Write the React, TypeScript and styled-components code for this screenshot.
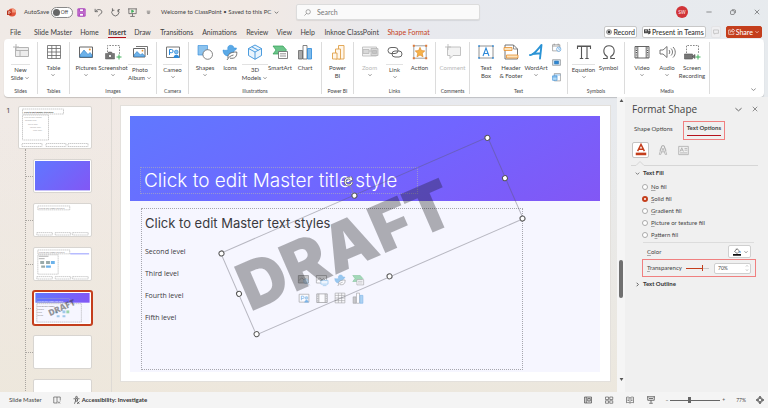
import React from "react";
import styled, { createGlobalStyle, css } from "styled-components";

const ui = `"Open Sans", "Noto Sans", sans-serif`;
const c = {
  text: "#444",
  dim: "#b8b8b8",
  line: "#dcdcdc",
  brand: "#c43e1c",
  deep: "#b5121b",
  blue: "#2b88d8",
  sky: "#83beec",
  orange: "#e8912d",
  green: "#3fae5a",
  mark: "#f08080",
};

const Global = createGlobalStyle`
  *, *::before, *::after { box-sizing: border-box; }
  body { margin: 0; font-family: ${ui}; color: ${c.text}; font-size: 6px; line-height: 8px; }
  button, input { font: inherit; color: inherit; margin: 0; }
  button { background: none; border: 0; padding: 0; }
  svg { display: block; flex: none; overflow: visible; }
`;

/* ---------- icons ---------- */

const shapes: Record<string, React.ReactNode> = {
  newSlide: (
    <g stroke="#b4b4b4" fill="#ededed">
      <path d="M2.5 3.500h13v9h-13z" />
      <path d="M2.500 6.500h13M7 6.500v6" />
      <path d="M3 0v6M0 3h6" fill="none" />
    </g>
  ),
  table: (
    <g stroke="#666" fill="#fff" strokeWidth=".8">
      <path d="M1.500 1.500h13v13h-13z" />
      <path d="M1.500 4.500h13M1.500 8h13M1.500 11.500h13M5.800 1.500v13M10.200 1.500v13" />
    </g>
  ),
  pictures: (
    <g>
      <path d="M1.500 3h13v10.500h-13z" fill="#fff" stroke="#666" />
      <path d="M2 11l4-5 4 4.500 2-2L14 11v2H2z" fill="#6cb2ea" stroke="#2b7cc4" strokeWidth=".6" />
      <circle cx="11.800" cy="5.500" r="1" fill={c.orange} />
    </g>
  ),
  screenshot: (
    <g fill="none">
      <path d="M2.500 8V1.500h12V10" stroke="#888" strokeDasharray="1.600 1.200" />
      <path d="M.5 9.500h2l1-1.500h3l1 1.500h2v5.500h-9z" fill="#777" stroke="#555" strokeWidth=".5" />
      <circle cx="5" cy="12" r="1.700" fill="#eee" stroke="#444" strokeWidth=".6" />
      <path d="M14 10.500v5M11.500 13h5" stroke={c.green} />
    </g>
  ),
  album: (
    <g>
      <path d="M4 2.500h11.500V11" fill="none" stroke="#666" strokeWidth=".9" />
      <path d="M1.500 4.500h11.500v8.500H1.500z" fill="#fff" stroke="#666" />
      <path d="M2 11l3-3.500L8.500 11l1.500-1.500 2.500 2v1H2z" fill="#6cb2ea" stroke="#2b7cc4" strokeWidth=".6" />
      <circle cx="10.500" cy="6.700" r=".9" fill={c.orange} />
    </g>
  ),
  cameo: (
    <g>
      <path d="M1.500 3h13v10.500h-13z" fill="#fff" stroke="#777" />
      <path d="M4.500 11V5.500h2a1.600 1.600 0 010 3.200h-2" fill="none" stroke={c.blue} />
      <circle cx="11.300" cy="8" r="1.900" fill={c.sky} stroke={c.blue} strokeWidth=".6" />
      <path d="M8.500 14c0-4.500 5.800-4.500 5.800 0z" fill={c.blue} />
    </g>
  ),
  shapes: (
    <g>
      <path d="M1 1.500h9.500v9.500H1z" fill="#8cc3ee" stroke={c.blue} strokeWidth=".6" />
      <circle cx="10.700" cy="10.500" r="4.800" fill="#fff" stroke="#666" strokeWidth=".8" />
    </g>
  ),
  icons: (
    <g>
      <path d="M1 6c2 .5 4 .5 5-.5C5 3 7 .8 9.300 1.300c2 .3 2.500 1.700 2.500 2.700l2.700 0c-.3 2-1.500 2.500-2.500 3-.5 4-3 5-6 5C3 12 1 9.500 1 6z" fill="#5aa9e6" stroke={c.blue} strokeWidth=".5" />
      <path d="M6 14c-.5-4 2.500-6 8.800-6C15 12 13.500 15 8 14.200M5 16c1.500-3 4-4.500 6.500-5" fill="#fff" stroke="#555" strokeWidth=".8" />
    </g>
  ),
  cube: (
    <g fill="#e9f4fd" stroke="#3a92da" strokeWidth=".9">
      <path d="M8 1l6.500 3.500v7L8 15.300 1.500 11.500v-7z" />
      <path d="M1.500 4.500L8 8l6.500-3.500M8 8v7.300M4.800 2.800l6.500 3.500" fill="none" />
    </g>
  ),
  smartart: (
    <g>
      <path d="M1 2h10l3.500 4L11 10H1l3-4z" fill="#6cc58a" stroke="#2f9e55" strokeWidth=".7" />
      <path d="M6.500 7.500h9v7h-9z" fill="#fff" stroke="#666" strokeWidth=".8" />
      <path d="M8 9.800h6M8 12h6" stroke="#777" strokeWidth=".8" />
    </g>
  ),
  chart: (
    <g strokeWidth=".8">
      <path d="M1.500 6.500h4v8.500h-4z" fill="#aaa" stroke="#666" />
      <path d="M6 1.500h4v13.500H6z" fill="#fff" stroke="#666" />
      <path d="M10.500 4.500h4V15h-4z" fill="#7dbbec" stroke={c.blue} />
    </g>
  ),
  powerbi: (
    <g fill="#fff6ea" stroke="#e0a04a" strokeWidth=".9">
      <path d="M8.500 1.500h5.500v13.500H8.500z" />
      <path d="M5.500 5h5v10h-5z" />
      <path d="M2.500 9h4.500v6H2.500z" />
    </g>
  ),
  zoom: (
    <g fill="#d8d8d8" stroke="#b8b8b8" strokeWidth=".8">
      <path d="M.5 3h14v9H.5z" fill="#f2f2f2" />
      <path d="M1 5.500h6v4H1zM7 7h3M9 4.500h7v7H9z" />
      <path d="M10.500 6.500h4v3h-4z" fill="#c4c4c4" />
    </g>
  ),
  link: (
    <g fill="none" stroke="#666">
      <rect x="1" y="3.500" width="10" height="6" rx="3" />
      <rect x="5" y="7" width="10" height="6" rx="3" />
    </g>
  ),
  action: (
    <g>
      <path d="M1.800 1.800h12.400v12.400H1.800z" fill="#fff" stroke="#888" strokeWidth=".8" />
      <path d="M8 3.300l1.400 3.200 3.400.4-2.500 2.400.7 3.500L8 11l-3 1.800.7-3.500-2.500-2.400 3.400-.4z" fill="#f6b24a" stroke="#dd8420" strokeWidth=".6" />
      <path d="M.8.800h2v2h-2zM13.200.800h2v2h-2zM.8 13.200h2v2h-2zM13.200 13.200h2v2h-2z" fill="#e07b39" />
    </g>
  ),
  comment: (
    <g fill="#f3f3f3" stroke="#bcbcbc" strokeWidth=".9">
      <path d="M2.500 3h13v8.500H8L5 14.500v-3H2.500z" />
      <path d="M3 0v6M0 3h6" />
    </g>
  ),
  textbox: (
    <g>
      <path d="M1 2h14v12H1z" fill="#fff" stroke="#777" strokeWidth=".8" />
      <path d="M5 12l3-8 3 8M6 9.500h4" fill="none" stroke={c.blue} strokeWidth="1.100" />
      <path d="M.200 1.200h1.600v1.600H.200zM14.200 1.200h1.600v1.600h-1.600zM.200 13.200h1.600v1.600H.200zM14.200 13.200h1.600v1.600h-1.600z" fill={c.blue} />
    </g>
  ),
  header: (
    <g>
      <path d="M2 1h8.500l4 4v10H2z" fill="#fff" stroke="#666" strokeWidth=".9" />
      <path d="M1 3.500h8v3H1zM3.500 11h11.500v3H3.500z" fill="#fbe3bd" stroke={c.orange} strokeWidth=".8" />
      <path d="M10.500 1v4h4" fill="none" stroke="#666" strokeWidth=".7" />
    </g>
  ),
  wordart: (
    <path d="M2 11c3 1 8-6 11.500-10L12 14.500M4.500 10l8-.8" fill="none" stroke="#2a93d5" strokeWidth="1.900" strokeLinecap="round" strokeLinejoin="round" />
  ),
  date: (
    <g fill="#fff" stroke="#777">
      <path d="M1 3h13v11H1zM1 5.500h13M4 1v3M11 1v3" />
      <circle cx="12" cy="11" r="3.800" stroke={c.blue} />
      <path d="M12 9v2.200h2" stroke={c.blue} />
    </g>
  ),
  number: (
    <g fill="#cfe5f7" stroke="#777">
      <path d="M1 3h14v10H1z" />
      <path d="M4.500 5.500h7v5h-7z" fill={c.blue} stroke="#2b6ca8" />
    </g>
  ),
  object: (
    <g fill="#fff" stroke="#777">
      <path d="M4 1h11v13H4z" />
      <path d="M1 5h8v8H1z" fill="#b5daf5" stroke={c.blue} />
      <path d="M1 7h8M4 3.500h11" stroke={c.blue} />
    </g>
  ),
  equation: (
    <path d="M1.500 5V2h13v3M5.500 2v12.500M3.800 14.500h3.400M11 2v12.500M9.300 14.500h3.400M1.500 2.500h13" fill="none" stroke="#555" strokeWidth="1.100" />
  ),
  symbol: (
    <path d="M2 14.500h4.200v-2C1 9.500 2 1.800 8 1.800s7 7.700 1.800 10.700v2H14" fill="none" stroke="#555" strokeWidth="1.100" />
  ),
  video: (
    <g fill="#fff" stroke="#555" strokeWidth=".9">
      <path d="M1 2.500h14v11.500H1zM3.800 2.500v11.500M12.200 2.500v11.500" />
      <path d="M2.400 3.500v10M13.600 3.500v10" strokeDasharray="1.100 1.200" strokeWidth="1.200" />
    </g>
  ),
  audio: (
    <g fill="none" stroke="#666" strokeWidth=".9">
      <path d="M1 6h3l4-3.500v11L4 10H1z" />
      <path d="M10 6c1 1 1 3 0 4M12 4.500c2 2 2 5 0 7M14 3c3 3 3 7.500 0 10.500" />
    </g>
  ),
  recording: (
    <g fill="none">
      <path d="M2.500 9V1.500h12V10" stroke="#888" strokeDasharray="1.600 1.200" />
      <path d="M.5 10h8v5h-8zM8.500 12l2.500-1.500v4L8.500 13z" fill="#777" stroke="#555" strokeWidth=".6" />
      <path d="M14 10.500v5M11.500 13h5" stroke={c.green} />
    </g>
  ),
  caret: <path d="M4 6l4 4 4-4" fill="none" stroke="#555" strokeWidth="1.700" />,
  chevron: <path d="M1 5l7 6 7-6" fill="none" stroke="#555" strokeWidth="2" />,
  caretRight: <path d="M6 4l4 4-4 4" fill="none" stroke="#444" strokeWidth="1.900" />,
  caretUp: <path d="M4 10l4-4 4 4" fill="none" stroke="#666" strokeWidth="1.700" />,
  triUp: <path d="M8 3l6 10H2z" fill="#555" />,
  triDown: <path d="M8 13L2 3h12z" fill="#555" />,
  logo: (
    <g>
      <circle cx="9" cy="8" r="7" fill="#e0533a" />
      <path d="M9 1a7 7 0 017 7H9z" fill="#f39a7c" />
      <path d="M0 4.500h8v8H0z" fill="#b7321b" />
      <path d="M3 11V6.300h1.600a1.300 1.300 0 010 2.700H3" fill="none" stroke="#fff" />
    </g>
  ),
  save: (
    <g fill="#fff" stroke="#a63db8" strokeWidth="1.500">
      <path d="M1.500 1.500h13v13h-13z" fill="#c77ad3" />
      <path d="M4.500 1.500h7v5h-7zM4.500 9.500h7v5h-7z" />
    </g>
  ),
  undo: <path d="M2 1.500v5h5M2.300 6.300C5 1.500 14 1.500 14 7c0 3-3.500 4-6.500 7.500" fill="none" stroke="#555" strokeWidth="1.400" />,
  redo: <path d="M3 3.500A6.300 6.300 0 1012.500 3.500M2.500.5v3.500h3.500M12.500 7.500V3h3.500" fill="none" stroke="#555" strokeWidth="1.400" />,
  present: (
    <g fill="none" stroke="#555" strokeWidth="1.300">
      <path d="M0 1.500h16M1.500 1.500v8.500h13V1.500M8 10v4.500M4 15h8" />
      <path d="M6.500 3.500v4.500l4-2.200z" fill={c.green} stroke={c.green} />
    </g>
  ),
  more: <path d="M4 5h8M5 8.500l3 3 3-3z" fill="none" stroke="#555" strokeWidth="1.400" />,
  search: (
    <g fill="none" stroke="#777" strokeWidth="1.400">
      <circle cx="9.500" cy="6.500" r="5" />
      <path d="M6 10l-5 5" />
    </g>
  ),
  min: <path d="M1 8h14" stroke="#444" strokeWidth="1.500" />,
  restore: (
    <g fill="none" stroke="#444" strokeWidth="1.500">
      <rect x="1.500" y="4.500" width="10" height="10" rx="2" />
      <path d="M5 2h7c2 0 2.500 1 2.500 2.500V11" />
    </g>
  ),
  close: <path d="M2 2l12 12M14 2L2 14" stroke="#444" strokeWidth="1.500" />,
  record: (
    <g>
      <circle cx="8" cy="8" r="6.500" fill="none" stroke="#333" strokeWidth="1.500" />
      <circle cx="8" cy="8" r="3.800" fill="#333" />
    </g>
  ),
  teams: (
    <g fill="#444">
      <path d="M0 3h9v9H0z" />
      <path d="M2.500 5.500h4M4.500 5.500V10" stroke="#fff" strokeWidth="1.200" />
      <circle cx="12.500" cy="3.500" r="2" />
      <path d="M9.500 6.500H15V11c0 3-4 4-7 2.500h1.500z" />
    </g>
  ),
  bubble: <path d="M1.500 2.500h13v9H7L4.500 14v-2.500h-3z" fill="none" stroke="#b4b4b4" strokeWidth="1.700" />,
  share: <path d="M6 4.500H1.500v10h12V11M5.500 10c0-4 2-5.500 5.500-5.500V2l4.500 4-4.500 4V7.500c-2.500 0-4 .5-5.500 2.500z" fill="none" stroke="#fff" strokeWidth="1.400" />,
  fillA: (
    <g>
      <path d="M3.500 9.500L8 .5l4.500 9M5 7h6" fill="none" stroke={c.brand} strokeWidth="1.900" />
      <path d="M1 11.500h14v3.500H1z" fill={c.brand} />
    </g>
  ),
  outlineA: (
    <path d="M2 15L6.500 1h3L14 15h-2.500L8 5 4.500 15zM5.500 11h5M6.500 1L3 9M9.500 1L13 9" fill="none" stroke="#9a9a9a" strokeWidth=".9" />
  ),
  boxA: (
    <g fill="none" stroke="#999" strokeWidth=".9">
      <path d="M1 2h14v12H1zM9.500 5h4M9.500 7.500h4M3 11.500h10.500M3 9.500L5.500 4 8 9.500M4 7.500h3" />
    </g>
  ),
  bucket: (
    <g>
      <path d="M3 7l5-5.500 5 4.500-4.500 5z" fill="#fff" stroke="#444" strokeWidth="1.300" />
      <path d="M6.500 4V1" stroke="#444" />
      <path d="M14 6v4" stroke={c.blue} strokeWidth="1.800" />
      <path d="M0 12h16v3.500H0z" fill="#111" />
    </g>
  ),
  book: (
    <g fill="none" stroke="#444" strokeWidth="1.200">
      <path d="M8 14H1.500V2H8v12M8 2h6.500v7M10 11l4 4M14 11l-4 4" />
    </g>
  ),
  person: (
    <g fill="none" stroke="#333" strokeWidth="1.300">
      <circle cx="7" cy="2.500" r="1.800" />
      <path d="M1 5.500h12M5 6v4l-2 5.500M9 6v4M8 11l5 5M13 11l-5 5M5 10h4" />
    </g>
  ),
  normal: <path d="M1 2h14v12H1zM4.500 2v12M7.500 5h5v5h-5z" fill="#aaa" fillOpacity=".3" stroke="#444" strokeWidth="1.300" />,
  sorter: <path d="M1 2h6v5H1zM9.500 2h6v5h-6zM1 9.500h6v5H1zM9.500 9.500h6v5h-6z" fill="none" stroke="#444" strokeWidth="1.200" />,
  reading: <path d="M8 4C5 1.500 3 2 1 2.500v11c3-1 5-.5 7 1 2-1.500 4-2 7-1v-11C13 2 11 1.500 8 4v10M3 6h3M3 9h3M10 6h3M10 9h3" fill="none" stroke="#444" strokeWidth="1.200" />,
  show: <path d="M0 1.500h16M1.500 1.500v7h13v-7M8 8.500v5M4.500 14.500h7M4 5h8" fill="none" stroke="#444" strokeWidth="1.500" />,
  fit: (
    <g fill="none" stroke="#444" strokeWidth="1.400">
      <path d="M5 5h6v6H5zM8 0L5.500 3h5zM8 16l-2.500-3h5zM0 8l3-2.500v5zM16 8l-3-2.500v5z" />
    </g>
  ),
  picSearch: (
    <g fill="#777" stroke="#555">
      <path d="M.5 2h13.500v10H.5z" fill="#aaa" />
      <path d="M1 9l4-4 3 3 2-2 4 4" fill="none" />
      <circle cx="10.500" cy="9.500" r="3" fill="#9db9cd" stroke="#5a8fb8" />
      <path d="M12.500 12l3 3" stroke="#5a8fb8" />
    </g>
  ),
  picScreen: (
    <g fill="#fff" stroke="#777">
      <path d="M.5 2h13.500v10H.5z" />
      <path d="M1 9l4-4 3 3 2-2 4 4" fill="none" />
      <path d="M6.500 8.500h9.500v5H6.500zM9 15.500h5" stroke="#5aa9e6" fill="#e9f4fd" />
    </g>
  ),
};

const Icon = ({ name, size = 8 }: { name: string; size?: number }) => (
  <svg viewBox="0 0 16 16" width={size} height={size} aria-hidden="true">
    {shapes[name]}
  </svg>
);

/* ---------- frame ---------- */

const Page = styled.div`
  height: 100vh;
  display: grid;
  grid-template-rows: auto auto auto minmax(0, 1fr) auto;
  overflow: hidden;
  background: linear-gradient(to bottom, rgba(237, 231, 219, 0) 30%, rgba(237, 231, 219, 0.9) 100%),
    linear-gradient(100deg, #f0eae6 0%, #f1e9e4 30%, #e8e9ee 48%, #e7ebee 100%);
`;

const TitleBar = styled.header`
  display: flex;
  align-items: center;
  height: 24px;
  padding: 0 8px 0 7px;
`;
const Quick = styled.div`
  display: flex;
  align-items: center;
  gap: 8px;
  margin: 0 9px 0 4px;
`;
const AutoSave = styled.label`
  display: flex;
  align-items: center;
  gap: 2px;
  margin-left: 8px;
  font-family: Lato, ${ui};
  white-space: nowrap;
`;
const Switch = styled.span`
  display: flex;
  align-items: center;
  justify-content: space-between;
  width: 22px;
  height: 11px;
  padding: 0 4px 0 1px;
  border: 1px solid #888;
  border-radius: 6px;
  background: #fff;
  font-size: 5px;
  input {
    appearance: none;
    width: 7px;
    height: 7px;
    border-radius: 50%;
    background: #666;
  }
`;
const DocName = styled.button`
  display: flex;
  align-items: center;
  gap: 2px;
  width: 126px;
  font-family: Lato, ${ui};
  white-space: nowrap;
`;
const SearchBox = styled.label`
  display: flex;
  align-items: center;
  gap: 6px;
  flex: 0 1 184px;
  margin-left: 9px;
  height: 16px;
  padding: 0 7px;
  border: 1px solid #dcdcdc;
  border-radius: 2px;
  background: #fafafa;
  box-shadow: 0 1px 1px rgba(0, 0, 0, 0.08);
  input {
    flex: 1;
    min-width: 0;
    border: 0;
    padding: 0;
    background: none;
    font-family: Lato, ${ui};
    font-size: 7px;
    &::placeholder { color: #777; opacity: 1; }
  }
`;
const WindowTools = styled.div`
  display: flex;
  align-items: center;
  gap: 18px;
  margin-left: auto;
`;
const Avatar = styled.button`
  width: 12px;
  height: 12px;
  border-radius: 50%;
  background: #d13438;
  color: #fff;
  font-size: 5px;
  line-height: 12px;
`;

const TabRow = styled.nav`
  display: flex;
  align-items: center;
  height: 15px;
  padding: 0 6px 0 10px;
`;
const Tabs = styled.div`
  display: flex;
  gap: 8px;
`;
const Tab = styled.button<{ $active?: boolean; $accent?: boolean; $w: number }>`
  min-width: ${(p) => p.$w}px;
  height: 13px;
  padding: 1px 0 0;
  font-family: Lato, ${ui};
  font-size: 7px;
  line-height: 10px;
  text-align: left;
  white-space: nowrap;
  border-bottom: 1px solid transparent;
  color: ${(p) => (p.$accent ? c.brand : "#3f3f3f")};
  ${(p) => p.$active && css`font-weight: 700; border-bottom-color: ${c.deep};`}
`;
const Actions = styled.div`
  display: flex;
  align-items: center;
  gap: 5px;
  margin-left: auto;
`;
const ActionButton = styled.button<{ $fill?: boolean; $ghost?: boolean }>`
  display: flex;
  align-items: center;
  gap: 1px;
  height: 12px;
  padding: 0 1px;
  border: 1px solid ${(p) => (p.$ghost ? "#e4e4e6" : p.$fill ? c.brand : "#c8c8c8")};
  border-radius: 2px;
  background: ${(p) => (p.$ghost ? "#efeff1" : p.$fill ? c.brand : "#fff")};
  color: ${(p) => (p.$fill ? "#fff" : "#333")};
  font-family: Lato, ${ui};
  font-size: 7px;
  font-weight: 500;
  white-space: nowrap;
  path { ${(p) => p.$fill && css`stroke: #fff;`} }
`;

/* ---------- ribbon ---------- */

const Ribbon = styled.section`
  display: flex;
  margin: 0 4px;
  height: 58px;
  border-radius: 4px;
  background: #fff;
  box-shadow: 0 1px 1px rgba(0, 0, 0, 0.18);
`;
const Group = styled.div<{ $w: number }>`
  display: flex;
  flex-direction: column;
  align-items: center;
  justify-content: space-between;
  width: ${(p) => p.$w}px;
  margin: 3px 0;
  border-right: 1px solid ${c.line};
`;
const GroupTools = styled.div`
  display: flex;
  justify-content: center;
`;
const GroupName = styled.span`
  font-family: Lato, ${ui};
  font-size: 5px;
  line-height: 6px;
  white-space: nowrap;
`;
const Tool = styled.button<{ $w?: number; $dim?: boolean }>`
  display: flex;
  flex-direction: column;
  align-items: center;
  width: ${(p) => p.$w ?? 25}px;
  padding-top: 2px;
  font-family: Lato, ${ui};
  white-space: nowrap;
  color: ${(p) => (p.$dim ? c.dim : c.text)};
`;
const ToolLabel = styled.span<{ $split?: boolean }>`
  display: flex;
  flex-direction: column;
  align-items: center;
  margin-top: 4px;
  ${(p) => p.$split && css`border-top: 1px solid #e2e2e2; min-width: 17px; padding-top: 1px;`}
`;
const Line = styled.span`
  display: flex;
  align-items: center;
  gap: 1px;
  min-height: 6px;
`;
const SmallTools = styled.div`
  display: flex;
  flex-direction: column;
  align-items: center;
  gap: 6px;
  width: 15px;
  padding-top: 1px;
`;
const Collapse = styled.button`
  align-self: flex-end;
  margin: 0 8px 5px auto;
`;

type ToolDef = { icon: string; lines: string[]; split?: boolean; dim?: boolean; drop?: boolean };
const groups: { name: string; w: number; tw?: number; tools: ToolDef[] }[] = [
  { name: "Slides", w: 34, tools: [{ icon: "newSlide", lines: ["New", "Slide"], split: true, drop: true }] },
  { name: "Tables", w: 32, tools: [{ icon: "table", lines: ["Table", ""], drop: true }] },
  {
    name: "Images", w: 87, tw: 27,
    tools: [
      { icon: "pictures", lines: ["Pictures", ""], drop: true },
      { icon: "screenshot", lines: ["Screenshot", ""], drop: true },
      { icon: "album", lines: ["Photo", "Album"], split: true, drop: true },
    ],
  },
  { name: "Camera", w: 32, tools: [{ icon: "cameo", lines: ["Cameo", ""], split: true, drop: true }] },
  {
    name: "Illustrations", w: 133,
    tools: [
      { icon: "shapes", lines: ["Shapes", ""], drop: true },
      { icon: "icons", lines: ["Icons"] },
      { icon: "cube", lines: ["3D", "Models"], split: true, drop: true },
      { icon: "smartart", lines: ["SmartArt"] },
      { icon: "chart", lines: ["Chart"] },
    ],
  },
  { name: "Power BI", w: 32, tools: [{ icon: "powerbi", lines: ["Power", "BI"] }] },
  {
    name: "Links", w: 82,
    tools: [
      { icon: "zoom", lines: ["Zoom", ""], drop: true, dim: true },
      { icon: "link", lines: ["Link", ""], split: true, drop: true },
      { icon: "action", lines: ["Action"] },
    ],
  },
  { name: "Comments", w: 34, tools: [{ icon: "comment", lines: ["Comment"], dim: true }] },
  {
    name: "Text", w: 98,
    tools: [
      { icon: "textbox", lines: ["Text", "Box"] },
      { icon: "header", lines: ["Header", "& Footer"] },
      { icon: "wordart", lines: ["WordArt", ""], drop: true },
    ],
  },
  {
    name: "Symbols", w: 57,
    tools: [
      { icon: "equation", lines: ["Equation", ""], split: true, drop: true },
      { icon: "symbol", lines: ["Symbol"] },
    ],
  },
  {
    name: "Media", w: 85,
    tools: [
      { icon: "video", lines: ["Video", ""], drop: true },
      { icon: "audio", lines: ["Audio", ""], drop: true },
      { icon: "recording", lines: ["Screen", "Recording"] },
    ],
  },
];

/* ---------- thumbnails ---------- */

const Main = styled.main`
  display: grid;
  grid-template-columns: 112px minmax(0, 1fr) 8px 143px;
  min-height: 0;
`;
const Thumbs = styled.aside`
  display: flex;
  gap: 7px;
  padding: 9px 0 0 6px;
  border-right: 1px solid #dedad5;
  overflow: hidden;
  font-size: 8px;
`;
const Tree = styled.div`
  display: flex;
  flex-direction: column;
  gap: 10px;
  width: 74px;
`;
const Master = styled.button`
  display: block;
  width: 74px;
  height: 43px;
  flex: none;
  border: 1px solid #d8d5d1;
  border-radius: 2px;
  background: #fff;
  text-align: left;
`;
const Branch = styled.div`
  display: flex;
  flex-direction: column;
  gap: 10px;
  margin: -10px 0 0 7px;
  padding-top: 10px;
  border-left: 1px dotted #a9a5a0;
`;
const Leaf = styled.div`
  display: flex;
  align-items: center;
  flex: none;
  &::before {
    content: "";
    width: 7px;
    border-top: 1px dotted #a9a5a0;
  }
`;
const LeafSlide = styled.button<{ $selected?: boolean }>`
  display: block;
  width: 59px;
  height: 34px;
  padding: 1px;
  text-align: left;
  border: 1px solid #d8d5d1;
  border-radius: 2px;
  background: #fff;
  ${(p) => p.$selected && css`border-color: ${c.brand}; box-shadow: 0 0 0 1px ${c.brand};`}
`;
const Purple = styled.span`
  display: block;
  height: 100%;
  background: linear-gradient(135deg, #5f77ff, #8257f5);
  border-bottom: 1px solid #c9c2fb;
`;

const Miniature = ({ kind }: { kind: "master" | "title" | "content" | "draft" }) => {
  const box = { fill: "none", stroke: "#999", strokeWidth: 0.5, strokeDasharray: "1.500 .5" };
  if (kind === "master")
    return (
      <svg viewBox="0 0 72 41" width="100%" height="100%">
        <rect x="3.500" y="2" width="41" height="5" {...box} />
        <rect x="3.500" y="8" width="26" height="25" {...box} />
        <text x="5" y="5.500" fontSize="2" fontWeight="700" fill="#444">Click to edit Master title style</text>
        <g fontSize="2" fill="#999">
          <text x="5" y="11">Click to edit Master</text>
          <text x="6" y="14">Second level</text>
          <text x="9" y="17.500">Third level</text>
          <text x="11" y="21">Fourth level</text>
          <text x="14" y="24">Fifth level</text>
        </g>
        {[3, 27, 49].map((x) => <rect key={x} x={x} y="36.500" width="20" height="3" {...box} />)}
      </svg>
    );
  if (kind === "draft")
    return (
      <svg viewBox="0 0 56 31" width="100%" height="100%">
        <defs>
          <linearGradient id="mini"><stop stopColor="#5f77ff" /><stop offset="1" stopColor="#8257f5" /></linearGradient>
        </defs>
        <rect width="56" height="31" fill="#f6f6ff" />
        <rect width="56" height="10" fill="url(#mini)" />
        <rect x="1.500" y="6" width="34" height="3.500" fill="none" stroke="#aab" strokeWidth=".4" />
        <text x="2" y="9" fontSize="2" fill="#fff">Click to edit Master title style</text>
        <rect x="1.500" y="11" width="46" height="19" {...box} />
        <text x="2" y="14" fontSize="2" fill="#555">Click to edit Master</text>
        <g fontSize="2" fill="#777">
          <text x="2" y="17.500">Second</text><text x="2" y="20.500">Third</text><text x="2" y="24">Fourth</text>
        </g>
        <path d="M20 19h3v2h-3zM28 18h3v3h-3zM22 23h3v2h-3zM28 23h3v2h-3z" fill="#9fc8ea" />
        <path d="M32 18h3v3h-3z" fill="#9bd3ab" />
        <text x="15" y="24" fontSize="9" fontWeight="800" fill="#333" fillOpacity=".5" transform="rotate(-24 15 24)">DRAFT</text>
      </svg>
    );
  return (
    <svg viewBox="0 0 56 31" width="100%" height="100%">
      <rect x="2.500" y="1" width="33" height="4" {...box} />
      <text x="3.500" y="4" fontSize="2" fill="#777">Click to edit Master title style</text>
      {kind === "content" && (
        <g>
          <path d="M36 5h19.500" stroke="#5f6bff" strokeWidth=".7" />
          <rect x="2.500" y="6" width="21" height="20" {...box} />
          <path d="M3.500 7.500h10M3.500 10h6" stroke="#777" strokeWidth=".6" />
          <path d="M5 12.500h4v3H5zM11 12.500h4v3h-4zM6 17h4v2.500H6zM3.500 17h1" fill="#9aa" />
          <path d="M16 12.500h4v3h-4zM11 17h5v2.500h-5z" fill="#6cb2ea" />
        </g>
      )}
      {[1.5, 20.5, 38.5].map((x) => <rect key={x} x={x} y="28.500" width="16" height="2.500" {...box} />)}
    </svg>
  );
};

/* ---------- slide ---------- */

const Stage = styled.section`
  padding: 8px 6px 10px 8px;
  min-width: 0;
`;
const Paper = styled.div`
  height: 100%;
  max-height: 277px;
  padding: 10px 10px 9px 9px;
  background: #fff;
  border: 1px solid #e3e0dc;
  display: flex;
`;
const Slide = styled.article`
  position: relative;
  flex: 1;
  min-width: 0;
  display: flex;
  flex-direction: column;
  background: #f6f6ff;
  font-family: Inter, ${ui};
`;
const SlideHead = styled.div`
  display: flex;
  align-items: flex-end;
  height: 85px;
  padding: 0 10px 7px;
  background: linear-gradient(150deg, #6078ff 0%, #7165ff 55%, #8257f5 100%);
`;
const TitleHolder = styled.h1`
  width: 278px;
  height: 27px;
  margin: 0;
  padding-left: 4px;
  outline: 1px dotted rgba(170, 170, 190, 0.7);
  outline-offset: -1px;
  color: #fff;
  font-size: 19px;
  font-weight: 300;
  line-height: 28px;
  white-space: nowrap;
`;
const BodyHolder = styled.div`
  flex: 1;
  width: 382px;
  margin: 7px 0 2px 11px;
  padding: 5px 3px;
  border: 1px dotted #a6a6ae;
  color: #3a3a40;
`;
const BodyLead = styled.p`
  margin: 0 0 9px;
  font-size: 13px;
  line-height: 18px;
  white-space: nowrap;
`;
const Level = styled.p`
  margin: 0;
  font-family: ${ui};
  font-size: 7px;
  line-height: 22px;
`;
const Inserts = styled.div`
  position: absolute;
  left: 168px;
  top: 158px;
  display: grid;
  grid-template-columns: repeat(4, 12px);
  gap: 6px;
  opacity: 0.6;
`;
const Watermark = styled.div`
  position: absolute;
  left: 96px;
  top: 75px;
  width: 292px;
  height: 90px;
  padding-left: 3px;
  transform: rotate(-23.500deg);
  border: 1px solid rgba(90, 90, 100, 0.4);
  color: rgba(20, 20, 25, 0.33);
  font-family: Inter, ${ui};
  font-size: 66px;
  font-weight: 900;
  line-height: 82px;
`;
const Knob = styled.i<{ $x: number; $y: number }>`
  position: absolute;
  left: ${(p) => p.$x}%;
  top: ${(p) => p.$y}%;
  width: 6px;
  height: 6px;
  margin: -3px;
  border: 1px solid #555;
  border-radius: 50%;
  background: #fff;
`;
const Rotor = styled.i`
  position: absolute;
  left: 50%;
  top: -20px;
  width: 10px;
  height: 20px;
  margin-left: -5px;
`;

const ScrollTrack = styled.div`
  display: flex;
  flex-direction: column;
  align-items: center;
  justify-content: space-between;
  padding: 1px 0 10px;
  background: #f5f5f5;
`;
const ScrollThumb = styled.div`
  width: 4px;
  height: 38px;
  margin-top: 78px;
  border-radius: 2px;
  background: #707070;
`;

/* ---------- format pane ---------- */

const Pane = styled.aside`
  padding: 4px 10px 0 6px;
  background: #f0f0f0;
  white-space: nowrap;
  font-family: Lato, ${ui};
  font-size: 6px;
`;
const PaneHead = styled.div`
  display: flex;
  align-items: center;
  gap: 10px;
  height: 16px;
  padding: 0 0 0 1px;
  h2 { margin: 0 auto 0 0; font-family: ${ui}; font-size: 10px; font-weight: 400; line-height: 16px; }
`;
const PaneTabs = styled.div`
  display: flex;
  gap: 10px;
  margin-top: 4px;
  padding-left: 3px;
`;
const PaneTab = styled.button<{ $active?: boolean }>`
  height: 19px;
  font-size: 6px;
  padding-bottom: 3px;
  ${(p) => p.$active && css`
    padding: 0 3px 3px;
    border: 1px solid ${c.mark};
    font-weight: 700;
    span { display: block; border-bottom: 1px solid ${c.deep}; padding: 2px 0 3px; }
  `}
`;
const FillKinds = styled.div`
  display: flex;
  align-items: center;
  gap: 8px;
  margin: 2px 0 0 1px;
`;
const KindButton = styled.button<{ $on?: boolean }>`
  display: grid;
  place-items: center;
  width: ${(p) => (p.$on ? 17 : 12)}px;
  height: 16px;
  ${(p) => p.$on && css`border: 1px solid #c4c4c4; border-radius: 2px; background: #fff;`}
`;
const Notch = styled.svg`
  width: 100%;
  margin-top: 3px;
`;
const SectionTitle = styled.button`
  display: flex;
  align-items: center;
  gap: 2px;
  padding-left: 3px;
  height: 14px;
  font-weight: 700;
  color: #333;
`;
const Radios = styled.div`
  padding-top: 1px;
`;
const Radio = styled.label`
  display: flex;
  align-items: center;
  gap: 3px;
  height: 12px;
  padding-left: 11px;
  input {
    appearance: none;
    width: 6px;
    height: 6px;
    border: 1px solid #aaa;
    border-radius: 50%;
    background: #fff;
    &:checked { border: 2px solid ${c.brand}; }
  }
  u { text-decoration-thickness: 1px; text-decoration-color: #aaa; }
`;
const Field = styled.div<{ $marked?: boolean }>`
  display: flex;
  align-items: center;
  justify-content: space-between;
  height: ${(p) => (p.$marked ? 18 : 15)}px;
  margin: 0 2px 0 11px;
  padding: 0 4px;
  border: 1px solid ${(p) => (p.$marked ? c.mark : "transparent")};
  u { text-decoration-color: #aaa; }
`;
const Rule = styled.hr`
  margin: 1px 4px 1px 12px;
  border: 0;
  border-top: 1px solid #dcdcdc;
`;
const ColorPick = styled.button`
  display: flex;
  align-items: center;
  gap: 2px;
  height: 13px;
  padding: 0 1px 0 4px;
  border: 1px solid #cfcfcf;
  border-radius: 2px;
  background: #fff;
`;
const Range = styled.input<{ $tone: string; $rest: string }>`
  appearance: none;
  width: ${(p) => (p.$tone === c.brand ? 23 : 50)}px;
  height: 8px;
  background: linear-gradient(90deg, ${(p) => p.$tone} 70%, ${(p) => p.$rest} 70%) center / 100% 1px no-repeat;
  &::-webkit-slider-thumb {
    appearance: none;
    width: ${(p) => (p.$tone === c.brand ? 1 : 3)}px;
    height: 6px;
    background: ${(p) => p.$tone};
  }
`;
const Spin = styled.span`
  display: flex;
  align-items: center;
  width: 37px;
  height: 11px;
  padding: 0 1px 0 3px;
  border: 1px solid #cfcfcf;
  border-radius: 2px;
  background: #fff;
  input { width: 100%; min-width: 0; border: 0; padding: 0; font-size: 5px; background: none; }
`;

/* ---------- status bar ---------- */

const StatusBar = styled.footer`
  display: flex;
  align-items: center;
  height: 16px;
  padding: 0 4px 0 9px;
  background: #f4f4f4;
  font-family: Lato, ${ui};
  font-size: 5px;
  white-space: nowrap;
`;
const StatusText = styled.span`
  font-size: 6px;
  margin-right: 11px;
`;
const Access = styled.button`
  display: flex;
  align-items: center;
  gap: 1px;
  margin-left: 12px;
  font-weight: 700;
  font-size: 6px;
  color: #333;
`;
const ViewTools = styled.div`
  display: flex;
  align-items: center;
  gap: 13px;
  margin-left: auto;
`;
const ZoomTools = styled.div`
  display: flex;
  align-items: center;
  gap: 2px;
  margin-left: 10px;
  color: #555;
`;
const Percent = styled.span`
  margin: 0 10px 0 11px;
`;

const tabs: [string, number][] = [
  ["File", 16], ["Slide Master", 38], ["Home", 20], ["Insert", 18], ["Draw", 18], ["Transitions", 34],
  ["Animations", 36], ["Review", 22], ["View", 16], ["Help", 16], ["Inknoe ClassPoint", 55], ["Shape Format", 43],
];
const fills = ["No fill", "Solid fill", "Gradient fill", "Picture or texture fill", "Pattern fill"];
const hotkey: Record<string, number> = { "Pattern fill": 1 };
const knobs = [[0, 0], [50, 0], [100, 0], [100, 50], [100, 100], [50, 100], [0, 100], [0, 50]];

const Hot = ({ text }: { text: string }) => {
  const i = hotkey[text] ?? 0;
  return <span>{text.slice(0, i)}<u>{text[i]}</u>{text.slice(i + 1)}</span>;
};

export default function App() {
  return (
    <>
      <Global />
      <Page>
        <TitleBar>
          <Icon name="logo" size={9} />
          <AutoSave>AutoSave<Switch><input type="checkbox" aria-label="AutoSave" />Off</Switch></AutoSave>
          <Quick>
            {["save", "undo", "redo", "present", "more"].map((n) => (
              <button key={n} aria-label={n}><Icon name={n} size={n === "more" ? 7 : 9} /></button>
            ))}
          </Quick>
          <DocName>Welcome to ClassPoint • Saved to this PC <Icon name="caret" size={7} /></DocName>
          <SearchBox><Icon name="search" size={7} /><input placeholder="Search" aria-label="Search" /></SearchBox>
          <WindowTools>
            <Avatar>SW</Avatar>
            {["min", "restore", "close"].map((n) => (
              <button key={n} aria-label={n}><Icon name={n} size={6} /></button>
            ))}
          </WindowTools>
        </TitleBar>

        <TabRow>
          <Tabs>
            {tabs.map(([t, w]) => (
              <Tab key={t} $w={w} $active={t === "Insert"} $accent={t === "Shape Format"}>{t}</Tab>
            ))}
          </Tabs>
          <Actions>
            <ActionButton><Icon name="record" size={6} />Record</ActionButton>
            <ActionButton><Icon name="teams" size={7} />Present in Teams</ActionButton>
            <ActionButton $ghost aria-label="Comments"><Icon name="bubble" size={6} /></ActionButton>
            <ActionButton $fill><Icon name="share" size={7} />Share<Icon name="caret" size={6} /></ActionButton>
          </Actions>
        </TabRow>

        <Ribbon>
          {groups.map((g) => (
            <Group key={g.name} $w={g.w}>
              <GroupTools>
                {g.tools.map((t) => (
                  <Tool key={t.icon} $w={g.tw} $dim={t.dim}>
                    <Icon name={t.icon} size={16} />
                    <ToolLabel $split={t.split}>
                      {t.lines.map((l, i) => (
                        <Line key={i}>
                          {l}
                          {t.drop && i === t.lines.length - 1 && <Icon name="caret" size={6} />}
                        </Line>
                      ))}
                    </ToolLabel>
                  </Tool>
                ))}
                {g.name === "Text" && (
                  <SmallTools>
                    {["date", "number", "object"].map((n) => (
                      <button key={n} aria-label={n}><Icon name={n} size={9} /></button>
                    ))}
                  </SmallTools>
                )}
              </GroupTools>
              <GroupName>{g.name}</GroupName>
            </Group>
          ))}
          <Collapse aria-label="Collapse ribbon"><Icon name="chevron" size={5} /></Collapse>
        </Ribbon>

        <Main>
          <Thumbs>
            <span>1</span>
            <Tree>
              <Master aria-label="Slide master"><Miniature kind="master" /></Master>
              <Branch>
                <Leaf><LeafSlide aria-label="Title layout"><Purple /></LeafSlide></Leaf>
                <Leaf><LeafSlide><Miniature kind="title" /></LeafSlide></Leaf>
                <Leaf><LeafSlide><Miniature kind="content" /></LeafSlide></Leaf>
                <Leaf><LeafSlide $selected><Miniature kind="draft" /></LeafSlide></Leaf>
                <Leaf><LeafSlide aria-label="Blank layout" /></Leaf>
                <Leaf><LeafSlide aria-label="Blank layout" /></Leaf>
              </Branch>
            </Tree>
          </Thumbs>

          <Stage>
            <Paper>
              <Slide>
                <SlideHead><TitleHolder>Click to edit Master title style</TitleHolder></SlideHead>
                <BodyHolder>
                  <BodyLead>Click to edit Master text styles</BodyLead>
                  {["Second", "Third", "Fourth", "Fifth"].map((l) => <Level key={l}>{l} level</Level>)}
                </BodyHolder>
                <Inserts>
                  {["picSearch", "picScreen", "icons", "smartart", "cameo", "video", "table", "chart"].map((n) => (
                    <button key={n} aria-label={n}><Icon name={n} size={12} /></button>
                  ))}
                </Inserts>
                <Watermark>
                  DRAFT
                  <Rotor>
                    <svg viewBox="0 0 10 20" width="10" height="20">
                      <path d="M5 8v10" stroke="#8a86a8" strokeWidth=".8" />
                      <path d="M8.500 3.500A3.500 3.500 0 108.300 6.500M9 1v3H6" fill="none" stroke="#666" strokeWidth="2.500" />
                      <path d="M8.500 3.500A3.500 3.500 0 108.300 6.500M9 1v3H6" fill="none" stroke="#fff" strokeWidth="1" />
                    </svg>
                  </Rotor>
                  {knobs.map(([x, y]) => <Knob key={`${x}-${y}`} $x={x} $y={y} />)}
                </Watermark>
              </Slide>
            </Paper>
          </Stage>

          <ScrollTrack>
            <Icon name="triUp" size={5} />
            <ScrollThumb />
            <Icon name="triDown" size={5} />
          </ScrollTrack>

          <Pane>
            <PaneHead>
              <h2>Format Shape</h2>
              <button aria-label="Pane options"><Icon name="chevron" size={7} /></button>
              <button aria-label="Close pane"><Icon name="close" size={6} /></button>
            </PaneHead>
            <PaneTabs>
              <PaneTab>Shape Options</PaneTab>
              <PaneTab $active><span>Text Options</span></PaneTab>
            </PaneTabs>
            <FillKinds>
              <KindButton $on aria-label="Text fill and outline"><Icon name="fillA" size={12} /></KindButton>
              <KindButton aria-label="Text effects"><Icon name="outlineA" size={10} /></KindButton>
              <KindButton aria-label="Text box"><Icon name="boxA" size={11} /></KindButton>
            </FillKinds>
            <Notch viewBox="0 0 127 5" height="5">
              <path d="M0 4.500h5l4-4 4 4h114" fill="none" stroke="#d6d6d6" />
            </Notch>
            <SectionTitle><Icon name="caret" size={7} />Text Fill</SectionTitle>
            <Radios>
              {fills.map((f) => (
                <Radio key={f}>
                  <input type="radio" name="fill" defaultChecked={f === "Solid fill"} />
                  <Hot text={f} />
                </Radio>
              ))}
            </Radios>
            <Rule />
            <Field>
              <Hot text="Color" />
              <ColorPick aria-label="Color"><Icon name="bucket" size={8} /><Icon name="caret" size={6} /></ColorPick>
            </Field>
            <Field $marked>
              <Hot text="Transparency" />
              <Range type="range" defaultValue={70} $tone={c.brand} $rest="#c8c8c8" aria-label="Transparency" />
              <Spin>
                <input defaultValue="70%" aria-label="Transparency value" />
                <span><Icon name="caretUp" size={4} /><Icon name="caret" size={4} /></span>
              </Spin>
            </Field>
            <SectionTitle><Icon name="caretRight" size={7} />Text Outline</SectionTitle>
          </Pane>
        </Main>

        <StatusBar>
          <StatusText>Slide Master</StatusText>
          <Icon name="book" size={8} />
          <Access><Icon name="person" size={8} />Accessibility: Investigate</Access>
          <ViewTools>
            {["normal", "sorter", "reading", "show"].map((n) => (
              <button key={n} aria-label={n}><Icon name={n} size={8} /></button>
            ))}
          </ViewTools>
          <ZoomTools>
            <button aria-label="Zoom out">−</button>
            <Range type="range" defaultValue={38} $tone="#666" $rest="#666" aria-label="Zoom" />
            <button aria-label="Zoom in">+</button>
          </ZoomTools>
          <Percent>77%</Percent>
          <button aria-label="Fit slide"><Icon name="fit" size={8} /></button>
        </StatusBar>
      </Page>
    </>
  );
}
